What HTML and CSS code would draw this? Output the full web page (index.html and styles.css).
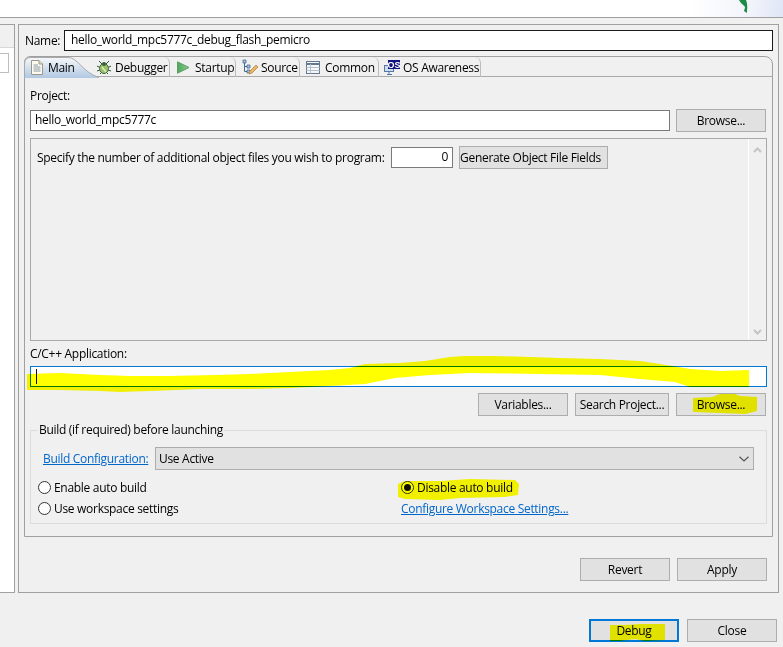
FILE: index.html
```html
<!DOCTYPE html>
<html lang="en">
<head>
<meta charset="utf-8">
<title>Debug Configurations</title>
<link rel="stylesheet" href="styles.css">
</head>
<body>
<div class="page">
  <header class="banner">
    <svg class="banner-art" width="60" height="17" viewBox="0 0 60 17">
      <path d="M16 0 C18 4 21 5 22 7 C22 9 21 10 21 11 L24 13 C24 9 25 5 23 0Z" fill="#1d8a45"/>
    </svg>
  </header>
  <div class="workspace">
    <aside class="sidebar">
      <div class="sidebar-head"></div>
      <div class="sidebar-body"><div class="filter"></div></div>
    </aside>
    <main class="editor">
      <div class="name-row">
        <label class="name-label">Name:</label>
        <div class="name-input">hello_world_mpc5777c_debug_flash_pemicro</div>
      </div>
      <section class="folder">
        <nav class="tabs">
          <div class="tab tab-main">
            <svg class="tab-shape" width="76" height="21" viewBox="0 0 76 21">
              <defs><linearGradient id="sel" x1="0" y1="0" x2="0" y2="1"><stop offset="0" stop-color="#f6f8fb"/><stop offset="1" stop-color="#b0c8e2"/></linearGradient></defs>
              <path d="M0.5 21 V7 Q0.5 0.5 7 0.5 H44 C54 0.5 58 15 75 20.5 V21 Z" fill="url(#sel)"/>
              <path d="M0.5 20 V7 Q0.5 0.5 7 0.5 H44 C54 0.5 58 15 75 20.5" fill="none" stroke="#a9a9a9"/>
            </svg>
            <svg class="ico" width="12" height="15" viewBox="0 0 12 15"><path d="M.5.5H8L11.5 4V14.5H.5Z" fill="#fdfbf0" stroke="#9b9686"/><path d="M8 .5V4H11.5" fill="#e6e0c8" stroke="#9b9686"/><path d="M2.5 5H7M2.5 7H9.5M2.5 9H9.5M2.5 11H9.5" stroke="#8c99a8"/></svg>
            <span class="tab-text">Main</span>
          </div>
          <div class="tab tab-debugger">
            <svg class="ico" width="16" height="15" viewBox="0 0 16 15"><path d="M3 1l3 3M13 1l-3 3M1 6l3 1.500M15 6l-3 1.500M1 11l3-1M15 11l-3-1M4 14l2-2M12 14l-2-2" stroke="#33503a" fill="none"/><ellipse cx="8" cy="8.500" rx="4.500" ry="5" fill="#9cbf6a" stroke="#3f6a3a"/><circle cx="8" cy="4" r="2" fill="#3f5f3a"/><path d="M6 7l4 5" stroke="#dcebbd" stroke-width="1.500"/></svg>
            <span class="tab-text">Debugger</span>
          </div>
          <div class="tab tab-startup">
            <svg class="ico" width="13" height="13" viewBox="0 0 13 13"><defs><linearGradient id="play" x1="0" y1="0" x2="1" y2="0"><stop offset="0" stop-color="#4fa65a"/><stop offset="1" stop-color="#8ccf8c"/></linearGradient></defs><path d="M.5.800L12 6.500.5 12.200Z" fill="url(#play)" stroke="#5b9e68"/></svg>
            <span class="tab-text">Startup</span>
          </div>
          <div class="tab tab-source">
            <svg class="ico" width="16" height="16" viewBox="0 0 16 16"><path d="M1 1h3v3H1zM5 6h3v3H5zM5 11h3v3H5z" fill="#a9c1dc" stroke="#47698f" stroke-width=".8"/><path d="M2.500 4V12.500H5M2.500 7.500H5" stroke="#47698f" fill="none"/><path d="M7 15l1-3 6-6 2 2-6 6z" fill="#e8b765" stroke="#b9883c" stroke-width=".8"/></svg>
            <span class="tab-text">Source</span>
          </div>
          <div class="tab tab-common">
            <svg class="ico" width="14" height="13" viewBox="0 0 14 13"><rect x=".5" y=".5" width="13" height="12" fill="#f4f6f8" stroke="#64788e"/><path d="M.5 3H13.500" stroke="#64788e" stroke-width="2"/><path d="M.5 6.500H13.500M.5 9.500H13.500M4.500 3V12.500" stroke="#b6c0cb"/></svg>
            <span class="tab-text">Common</span>
          </div>
          <div class="tab tab-os">
            <svg class="ico" width="16" height="15" viewBox="0 0 16 15"><rect x="0.500" y="5.500" width="9" height="6" fill="#cfdcec" stroke="#5578a8"/><path d="M3 14.500H8M5 11.500V14.500" stroke="#5578a8"/><rect x="4" y="0" width="12" height="9" fill="#10107f"/><text class="os-glyph" x="10" y="7.500">OS</text></svg>
            <span class="tab-text">OS Awareness</span>
          </div>
        </nav>
        <div class="folder-body">
          <label class="field-label project-label">Project:</label>
          <div class="input-row">
            <div class="input project-input">hello_world_mpc5777c</div>
            <button class="btn">Browse...</button>
          </div>
          <div class="scroll-box">
            <div class="scroll-content">
              <span class="spec-text">Specify the number of additional object files you wish to program:</span>
              <div class="input count-input">0</div>
              <button class="btn gen-btn">Generate Object File Fields</button>
            </div>
            <div class="scrollbar">
              <svg width="9" height="6" viewBox="0 0 9 6"><path d="M1 5L4.500 1.500 8 5" fill="none" stroke="#c4c4c4" stroke-width="2"/></svg>
              <svg width="9" height="6" viewBox="0 0 9 6"><path d="M1 1L4.500 4.500 8 1" fill="none" stroke="#c4c4c4" stroke-width="2"/></svg>
            </div>
          </div>
          <label class="field-label app-label">C/C++ Application:</label>
          <div class="app-input"><span class="caret"></span></div>
          <div class="app-buttons">
            <button class="btn">Variables...</button>
            <button class="btn search-btn">Search Project...</button>
            <button class="btn">Browse...</button>
          </div>
          <fieldset class="build-group">
            <legend class="build-legend">Build (if required) before launching</legend>
            <div class="config-row">
              <a class="link config-link" href="#">Build Configuration:</a>
              <div class="select"><span>Use Active</span>
                <svg width="10" height="6" viewBox="0 0 10 6"><path d="M.5.800L5 5 9.500.800" fill="none" stroke="#555" stroke-width="1.200"/></svg>
              </div>
            </div>
            <div class="radio-grid">
              <label class="radio-item"><span class="radio"></span>Enable auto build</label>
              <label class="radio-item"><span class="radio radio-on"></span>Disable auto build</label>
              <label class="radio-item"><span class="radio"></span>Use workspace settings</label>
              <a class="link" href="#">Configure Workspace Settings...</a>
            </div>
          </fieldset>
        </div>
      </section>
      <div class="editor-actions">
        <button class="btn">Revert</button>
        <button class="btn">Apply</button>
      </div>
    </main>
  </div>
  <footer class="dialog-actions">
    <button class="btn btn-default">Debug</button>
    <button class="btn">Close</button>
  </footer>
  <svg class="highlighter" width="783" height="647" viewBox="0 0 783 647">
    <path fill="#ffff00" d="M27 374 L60 373 L100 375 L130 376 L170 376 L215 375 L250 374 L290 372 L330 370 L350 368 L365 364 L400 363 L425 361 L450 357 L465 356 L495 356 L530 357 L560 358 L600 359 L640 361 L660 364 L690 369 L720 371 L749 370 L749 387 L690 387 L675 382 L640 379 L600 375 L540 374 L470 373 L430 375 L395 378 L375 382 L365 384 L330 386 L290 388 L250 389 L200 389 L150 391 L120 392 L100 391 L60 390 L27 390 Z"/>
    <path fill="#ffff00" d="M693 398 L712 397 L720 394 L735 394 L740 396 L757 397 L757 411 L745 414 L720 413 L693 412 Z"/>
    <path fill="#ffff00" d="M398 484 L405 481 L440 481 L470 479 L515 480 L519 484 L518 495 L505 497 L460 498 L440 500 L405 499 L398 497 Z"/>
    <path fill="#ffff00" d="M610 625 L625 625 L640 624 L665 624 L665 640 L645 641 L635 639 L620 641 L610 641 Z"/>
  </svg>
</div>
</body>
</html>
```
FILE: styles.css
```css
* { box-sizing: border-box; }
html, body { margin: 0; padding: 0; }
body {
  width: 783px;
  height: 647px;
  overflow: hidden;
  background: #f0f0f0;
  font-family: "Open Sans", "Noto Sans", sans-serif;
  font-size: 12px;
  letter-spacing: -0.3px;
  color: #000;
}
.page { position: relative; width: 783px; height: 647px; }

.banner {
  position: relative;
  height: 18px;
  background: linear-gradient(100deg, #fff 88%, #f1f3fb 96%, #dfe5f6 100%);
  border-bottom: 1px solid #a0a0a0;
}
.banner-art { position: absolute; right: 0; top: 0; }

.workspace { display: flex; height: 575px; margin-top: 6px; }
.sidebar {
  width: 15px;
  height: 569px;
  border: 1px solid #a0a0a0;
  border-left: 0;
  display: flex;
  flex-direction: column;
}
.sidebar-head { height: 23px; background: #f0f0f0; border-bottom: 1px solid #d8d8d8; }
.sidebar-body { flex: 1; background: #fff; padding-top: 5px; }
.filter { width: 9px; height: 20px; border: 1px solid #bdbdbd; border-left: 0; }

.editor {
  width: 761px;
  height: 569px;
  margin-left: 3px;
  border: 1px solid #a0a0a0;
  padding: 5px 9px 0 5px;
}
.name-row { display: flex; align-items: center; height: 21px; }
.name-label { width: 40px; padding-left: 1px; }
.name-input {
  width: 710px;
  height: 21px;
  margin-right: -4px;
  background: #fff;
  border: 1px solid #1a1a1a;
  padding: 0 6px;
  line-height: 18px;
}

.folder {
  position: relative;
  width: 749px;
  height: 481px;
  margin-top: 5px;
  margin-right: -4px;
  border: 1px solid #a0a0a0;
  border-radius: 6px 8px 0 0;
}
.tabs { display: flex; height: 20px; border-bottom: 1px solid #a9a9a9; margin: 0 -1px; }
.tab {
  position: relative;
  display: flex;
  align-items: center;
  height: 20px;
  border-right: 1px solid #bdbdbd;
  border-top-right-radius: 6px;
}
.tab-text { position: relative; white-space: nowrap; }
.ico { position: relative; flex: none; }
.tab-main { width: 72px; padding-left: 7px; border-right: 0; }
.tab-main .tab-text { margin-left: 5px; }
.tab-shape { position: absolute; left: 0; top: 0; }
.tab-debugger { width: 74px; padding-left: 0; }
.tab-debugger .tab-text { margin-left: 3px; }
.tab-startup { width: 66px; padding-left: 7px; }
.tab-startup .tab-text { margin-left: 5px; }
.tab-source { width: 64px; padding-left: 6px; }
.tab-source .tab-text { margin-left: 3px; }
.tab-common { width: 79px; padding-left: 6px; }
.tab-common .tab-text { margin-left: 5px; }
.tab-os { width: 102px; padding-left: 5px; }
.tab-os .tab-text { margin-left: 3px; }
.os-glyph { font-family: "Liberation Sans", sans-serif; font-size: 9px; font-weight: 700; fill: #fff; text-anchor: middle; letter-spacing: 0; }

.folder-body { padding: 0 6px 0 5px; }
.field-label { display: block; line-height: 16px; height: 16px; }
.project-label { margin-top: 11px; }
.input-row { display: flex; justify-content: space-between; align-items: center; margin-top: 5px; height: 23px; }
.input {
  height: 21px;
  background: #fff;
  border: 1px solid #7a7a7a;
  line-height: 18px;
  padding: 0 4px;
}
.project-input { width: 640px; }

.btn {
  width: 90px;
  height: 23px;
  padding: 0;
  background: #e1e1e1;
  border: 1px solid #adadad;
  font: inherit;
  letter-spacing: inherit;
  color: inherit;
  line-height: 19px;
  white-space: nowrap;
}

.scroll-box {
  display: flex;
  height: 203px;
  margin-top: 6px;
  width: 737px;
  border: 1px solid #a9a9a9;
  background: #f0f0f0;
}
.scroll-content { flex: 1; display: flex; align-items: flex-start; padding: 7px 0 0 6px; }
.spec-text { width: 354px; white-space: nowrap; line-height: 23px; }
.count-input { width: 62px; margin-top: 1px; text-align: right; padding-right: 4px; }
.gen-btn { width: 149px; margin-left: 6px; padding-right: 6px; }
.scrollbar {
  width: 18px;
  border-left: 1px solid #fff;
  display: flex;
  flex-direction: column;
  justify-content: space-between;
  align-items: center;
  padding: 8px 0 5px;
}
.scrollbar svg { display: block; }

.app-label { margin-top: 5px; }
.app-input {
  width: 737px;
  height: 21px;
  margin-top: 4px;
  background: #fff;
  border: 1px solid #0078d7;
  padding: 2px 5px;
}
.caret { display: block; width: 1px; height: 15px; background: #111; }
.app-buttons { display: flex; justify-content: flex-end; gap: 7px; width: 736px; margin-top: 6px; }
.search-btn { width: 94px; }

.build-group {
  width: 737px;
  height: 102px;
  margin: 6px 0 0;
  padding: 9px 12px 0 7px;
  border: 1px solid #dcdcdc;
  min-width: 0;
}
.build-legend { padding: 0 1px; margin-left: 0; line-height: 16px; }
.config-row { display: flex; align-items: center; height: 23px; }
.link { color: #0066cc; text-decoration: underline; }
.config-link { margin-left: 5px; width: 112px; white-space: nowrap; }
.select {
  flex: 1;
  height: 23px;
  display: flex;
  align-items: center;
  justify-content: space-between;
  background: #e1e1e1;
  border: 1px solid #adadad;
  padding: 0 3px 0 3px;
}
.select svg { margin-right: 1px; }
.radio-grid {
  display: grid;
  grid-template-columns: 363px 1fr;
  grid-auto-rows: 21px;
  align-items: center;
  margin-top: 7px;
}
.radio-item { display: flex; align-items: center; }
.radio {
  flex: none;
  width: 13px;
  height: 13px;
  margin-right: 3px;
  border: 1px solid #333;
  border-radius: 50%;
  background: #fff;
}
.radio-on { position: relative; }
.radio-on::after {
  content: "";
  position: absolute;
  left: 2px;
  top: 2px;
  width: 7px;
  height: 7px;
  border-radius: 50%;
  background: #111;
}

.editor-actions { display: flex; justify-content: flex-end; gap: 7px; margin-top: 21px; margin-right: 2px; }
.dialog-actions { display: flex; justify-content: flex-end; gap: 8px; padding-right: 6px; margin-top: 20px; height: 23px; }
.btn-default { border: 2px solid #0078d7; }

.highlighter { position: absolute; left: 0; top: 0; mix-blend-mode: multiply; pointer-events: none; }
```
